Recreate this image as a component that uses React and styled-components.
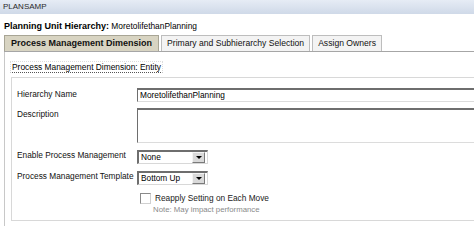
import React from "react";
import styled, { createGlobalStyle } from "styled-components";

const GlobalStyle = createGlobalStyle`
  html, body {
    margin: 0;
    padding: 0;
    background: #fff;
  }
  body {
    font-family: "Liberation Sans", Arial, sans-serif;
    color: #000;
    width: 474px;
    height: 226px;
    overflow: hidden;
  }
`;

const HeaderBar = styled.div`
  height: 14px;
  line-height: 14px;
  padding-left: 3px;
  font-size: 8px;
  color: #2a2a2a;
  background: linear-gradient(#e6ecf5, #cfd9e8);
`;

const Title = styled.div`
  height: 21px;
  line-height: 25px;
  padding-left: 4px;
  font-size: 8.4px;
  white-space: nowrap;
  b {
    font-size: 9px;
  }
`;

const TabRow = styled.div`
  display: flex;
  align-items: flex-end;
  margin-left: 4px;
  height: 16px;
  border-bottom: 1px solid #a6a6a6;
`;

const Tab = styled.div`
  height: 15px;
  line-height: 15px;
  padding: 0 ${(p) => (p.active ? "6px" : "5px")};
  margin-right: 2px;
  border: 1px solid ${(p) => (p.active ? "#a8a595" : "#bdbdbd")};
  border-bottom: none;
  background: ${(p) => (p.active ? "#d8d4c2" : "#f3f3f3")};
  font-size: ${(p) => (p.active ? "9px" : "8.6px")};
  font-weight: ${(p) => (p.active ? "bold" : "normal")};
  color: #111;
  white-space: nowrap;
`;

const Panel = styled.div`
  margin-left: 4px;
  border-left: 1px solid #c8c8c8;
  padding: 9px 0 0 6px;
  height: 165px;
  font-size: 8.4px;
  line-height: 10px;
`;

const SectionTitle = styled.div`
  width: fit-content;
  font-size: 8.4px;
  line-height: 10px;
  border: 1px dotted #555;
  border-top-color: #ddd;
  border-left-color: #ddd;
  border-right-color: #ddd;
  padding: 0 1px;
  margin-left: -1px;
`;

const InnerBox = styled.div`
  margin-top: 4px;
  width: 480px;
  height: 144px;
  border: 1px solid #d8d8d8;
  border-right: none;
  padding: 10px 0 0 5px;
  box-sizing: border-box;
`;

const FormGrid = styled.div`
  display: grid;
  grid-template-columns: 120px 1fr;
  row-gap: 6px;
  align-items: start;
`;

const Label = styled.div`
  font-size: 8.3px;
  line-height: 13px;
  white-space: nowrap;
  color: #111;
`;

const TextField = styled.div`
  height: 14px;
  box-sizing: border-box;
  border: 1px solid;
  border-color: #6e6e6e #d0d0d0 #dcdcdc #6e6e6e;
  border-top-width: 2px;
  font-size: 8.3px;
  line-height: 11px;
  padding-left: 2px;
  background: #fff;
  ${(p) => p.tall && "height: 35px;"}
`;

const Select = styled.div`
  display: flex;
  align-items: center;
  width: 71px;
  height: 14px;
  box-sizing: border-box;
  border: 1px solid;
  border-color: #6e6e6e #d8d8d8 #d8d8d8 #6e6e6e;
  border-width: 2px 1px 1px 2px;
  background: #fff;
  font-size: 8.3px;
  padding-left: 2px;
  margin-top: 1px;
`;

const SelectText = styled.span`
  flex: 1;
  line-height: 11px;
`;

const Arrow = styled.span`
  width: 11px;
  height: 9px;
  margin-right: 2px;
  background: #d9d9d9;
  border: 1px solid;
  border-color: #f4f4f4 #7a7a7a #7a7a7a #f4f4f4;
  display: flex;
  align-items: center;
  justify-content: center;
  &::after {
    content: "";
    border-left: 3px solid transparent;
    border-right: 3px solid transparent;
    border-top: 3px solid #000;
  }
`;

const CheckRow = styled.div`
  display: flex;
  align-items: center;
  gap: 4px;
  margin-left: 3px;
  margin-top: 1px;
`;

const CheckBox = styled.span`
  width: 9px;
  height: 9px;
  border: 1px solid #8a8a8a;
  border-right-color: #d0d0d0;
  border-bottom-color: #d0d0d0;
  background: #fff;
`;

const CheckLabel = styled.span`
  font-size: 8.3px;
  line-height: 12px;
  color: #222;
`;

const Note = styled.div`
  font-size: 7.8px;
  line-height: 11px;
  color: #8a8a8a;
  margin-left: 16px;
`;

const App = () => {
  return (
    <>
      <GlobalStyle />
      <HeaderBar>PLANSAMP</HeaderBar>
      <Title>
        <b>Planning Unit Hierarchy:</b> MoretolifethanPlanning
      </Title>
      <TabRow>
        <Tab active>Process Management Dimension</Tab>
        <Tab>Primary and Subhierarchy Selection</Tab>
        <Tab>Assign Owners</Tab>
      </TabRow>
      <Panel>
        <SectionTitle>Process Management Dimension: Entity</SectionTitle>
        <InnerBox>
          <FormGrid>
            <Label>Hierarchy Name</Label>
            <TextField>MoretolifethanPlanning</TextField>
            <Label>Description</Label>
            <TextField tall />
            <Label>Enable Process Management</Label>
            <Select>
              <SelectText>None</SelectText>
              <Arrow />
            </Select>
            <Label>Process Management Template</Label>
            <Select>
              <SelectText>Bottom Up</SelectText>
              <Arrow />
            </Select>
            <div />
            <div>
              <CheckRow>
                <CheckBox />
                <CheckLabel>Reapply Setting on Each Move</CheckLabel>
              </CheckRow>
              <Note>Note: May impact performance</Note>
            </div>
          </FormGrid>
        </InnerBox>
      </Panel>
    </>
  );
};

export default App;
